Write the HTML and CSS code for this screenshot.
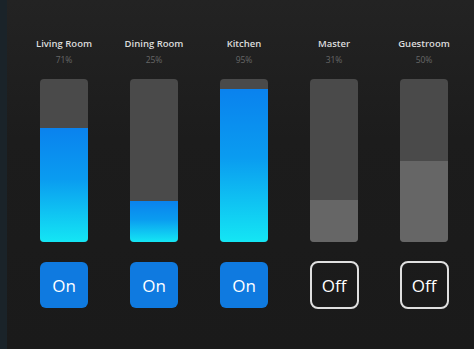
FILE: index.html
```html
<!DOCTYPE html>
<html lang="en">
<head>
  <meta charset="UTF-8">
  <title>Lights</title>
  <link rel="stylesheet" href="styles.css">
</head>
<body>
  <div class="edge"></div>
  <div class="panel">
    <div class="room">
      <div class="name">Living Room</div>
      <div class="pct">71%</div>
      <div class="track"><div class="fill" style="height: 70%"></div></div>
      <button class="toggle on">On</button>
    </div>
    <div class="room">
      <div class="name">Dining Room</div>
      <div class="pct">25%</div>
      <div class="track"><div class="fill" style="height: 25%"></div></div>
      <button class="toggle on">On</button>
    </div>
    <div class="room">
      <div class="name">Kitchen</div>
      <div class="pct">95%</div>
      <div class="track"><div class="fill" style="height: 94%"></div></div>
      <button class="toggle on">On</button>
    </div>
    <div class="room off">
      <div class="name">Master</div>
      <div class="pct">31%</div>
      <div class="track"><div class="fill" style="height: 26%"></div></div>
      <button class="toggle">Off</button>
    </div>
    <div class="room off">
      <div class="name">Guestroom</div>
      <div class="pct">50%</div>
      <div class="track"><div class="fill" style="height: 50%"></div></div>
      <button class="toggle">Off</button>
    </div>
  </div>
</body>
</html>
```
FILE: styles.css
```css
html, body {
  margin: 0;
  height: 100%;
}

body {
  display: flex;
  font-family: 'Open Sans', sans-serif;
  background: linear-gradient(180deg, #232323 0%, #1c1c1c 40%, #1a1a1a 100%);
  color: #e2e2e2;
}

.edge {
  width: 7px;
  background: #1a2329;
}

.panel {
  display: grid;
  grid-template-columns: repeat(5, 90px);
  padding: 37px 0 0 12px;
  align-items: start;
}

.room {
  display: flex;
  flex-direction: column;
  align-items: center;
}

.name {
  font-size: 9.5px;
  font-weight: 600;
  line-height: 14px;
  color: #dcdcdc;
}

.pct {
  font-size: 8.5px;
  line-height: 10px;
  margin-top: 4px;
  color: #676767;
}

.track {
  width: 48px;
  height: 163px;
  margin-top: 14px;
  border-radius: 4px;
  background: #4a4a4a;
  overflow: hidden;
  display: flex;
  align-items: flex-end;
}

.fill {
  width: 100%;
  background: linear-gradient(180deg, #0a82ee 0%, #0a9cf0 45%, #14e6f4 100%);
}

.off .fill {
  background: #666;
}

.toggle {
  width: 48px;
  height: 46px;
  margin-top: 20px;
  border-radius: 6px;
  border: none;
  font-family: 'Open Sans', sans-serif;
  font-size: 17px;
  color: #fff;
  padding: 0;
}

.toggle.on {
  background: #0f7ae0;
}

.off .toggle {
  background: transparent;
  border: 2px solid #e0e0e0;
  border-radius: 8px;
  width: 49px;
  height: 48px;
  margin-top: 19px;
}
```
